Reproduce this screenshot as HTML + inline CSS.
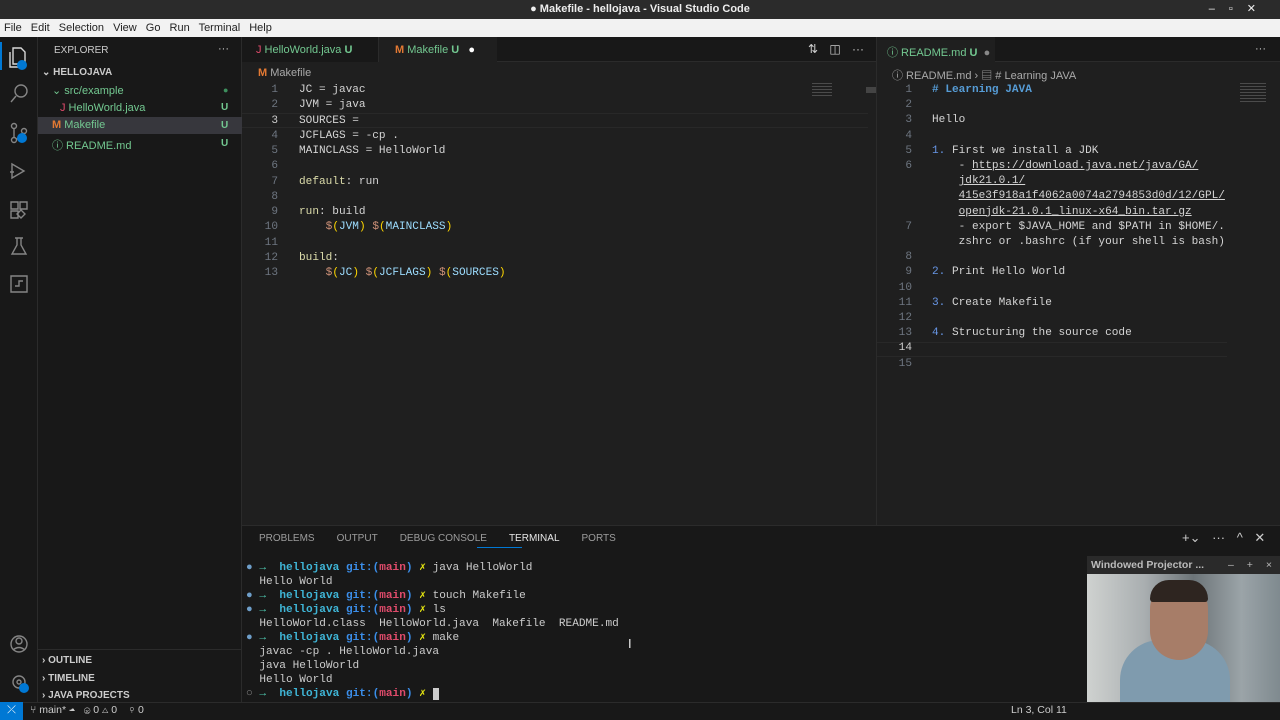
<!DOCTYPE html>
<html><head><meta charset="utf-8"><style>
*{box-sizing:border-box;margin:0;padding:0}
body{width:1280px;height:720px;overflow:hidden;background:#1f1f1f;font-family:"Liberation Sans",sans-serif;font-size:11px;color:#ccc;position:relative}
.a{position:absolute}
.mono{font-family:"Liberation Mono",monospace;font-size:11.1px;white-space:pre}
.ln{color:#6e7681;text-align:right;width:30px}
.u{color:#73c991}
</style></head><body>
<div class="a" style="left:0;top:0;width:1280px;height:19px;background:#2b2b2b;color:#eee;font-weight:bold;font-size:11px;text-align:center;line-height:19px">● Makefile - hellojava - Visual Studio Code<span style="position:absolute;right:10px;font-weight:normal;letter-spacing:14px">–▫✕</span></div>
<div class="a" style="left:0;top:19px;width:1280px;height:18px;background:#f2f2f2;color:#222;font-size:11px;line-height:18px;padding-left:4px;word-spacing:6px">File Edit Selection View Go Run Terminal Help</div>
<div class="a" style="left:0;top:37px;width:38px;height:665px;background:#181818;border-right:1px solid #2b2b2b"></div>
<div class="a" style="left:0;top:42px;width:2px;height:28px;background:#0078d4"></div>
<svg class="a" style="left:0;top:40px" width="38" height="660" fill="none" stroke="#858585" stroke-width="1.4">
<path d="M13 8h8l4 4v12h-12z M10 12v15h11" stroke="#d7d7d7"/><circle cx="22" cy="25" r="5" fill="#0078d4" stroke="none"/>
<circle cx="21" cy="51" r="6"/><path d="M16 56l-5 6"/>
<circle cx="14" cy="86" r="2.5"/><circle cx="14" cy="100" r="2.5"/><circle cx="24" cy="91" r="2.5"/><path d="M14 89v8 M24 94q0 4-8 5"/><circle cx="22" cy="98" r="5" fill="#0078d4" stroke="none"/>
<path d="M12 124l12 7-12 7z M10 132h4"/>
<path d="M11 162h7v7h-7z M20 162h7v7h-7z M11 171h7v7h-7z M21 170l4 4-4 4-4-4z"/>
<path d="M15 198h8 M17 198v7l-5 9h14l-5-9v-7"/>
<path d="M11 236h16v16h-16z M15 246h4v-5h4"/>
<circle cx="19" cy="604" r="8"/><circle cx="19" cy="601" r="3"/><path d="M13 610q6-5 12 0"/>
<circle cx="19" cy="642" r="6"/><circle cx="19" cy="642" r="2"/><circle cx="24" cy="648" r="5" fill="#0078d4" stroke="none"/>
</svg>
<div class="a" style="left:38px;top:37px;width:204px;height:665px;background:#181818;border-right:1px solid #2b2b2b"></div>
<div class="a" style="left:54px;top:45px;font-size:10px;color:#ccc">EXPLORER</div>
<div class="a" style="left:218px;top:43px;color:#ccc">···</div>
<div class="a" style="left:42px;top:67px;font-size:10px;font-weight:bold;color:#ccc">⌄ HELLOJAVA</div>
<div class="a" style="left:52px;top:84px;color:#73c991">⌄ src/example</div>
<div class="a" style="left:223px;top:85px;color:#3d8f5d;font-size:9px">●</div>
<div class="a" style="left:60px;top:102px;color:#73c991"><span style="color:#e04b6b">J</span> HelloWorld.java</div>
<div class="a" style="left:38px;top:117px;width:204px;height:17px;background:#37373d"></div>
<div class="a" style="left:52px;top:119px;color:#73c991"><span style="color:#e37933;font-weight:bold">M</span> Makefile</div>
<div class="a" style="left:52px;top:137px;color:#73c991">ⓘ README.md</div>
<div class="a u" style="left:221px;top:102px;font-weight:bold;font-size:10px">U</div>
<div class="a u" style="left:221px;top:120px;font-weight:bold;font-size:10px">U</div>
<div class="a u" style="left:221px;top:138px;font-weight:bold;font-size:10px">U</div>
<div class="a" style="left:38px;top:649px;width:204px;height:1px;background:#2b2b2b"></div>
<div class="a" style="left:42px;top:652px;font-size:10px;font-weight:bold;color:#ccc;line-height:17.5px">› OUTLINE<br>› TIMELINE<br>› JAVA PROJECTS</div>
<div class="a" style="left:242px;top:37px;width:634px;height:25px;background:#181818;border-bottom:1px solid #2b2b2b"></div>
<div class="a" style="left:242px;top:37px;width:137px;height:25px;background:#181818;border-right:1px solid #2b2b2b;padding:7px 0 0 14px;color:#73c991"><span style="color:#e04b6b">J</span> HelloWorld.java <b>U</b></div>
<div class="a" style="left:379px;top:37px;width:118px;height:26px;background:#1f1f1f;padding:7px 0 0 16px;color:#73c991"><span style="color:#e37933;font-weight:bold">M</span> Makefile <b>U</b> &nbsp;&nbsp;<span style="color:#fff">●</span></div>
<div class="a" style="left:808px;top:42px;color:#ccc;font-size:12px;word-spacing:8px">⇅ ◫ ···</div>
<div class="a" style="left:258px;top:67px;color:#aaa"><span style="color:#e37933;font-weight:bold">M</span> Makefile</div>
<div class="a" style="left:242px;top:113px;width:626px;height:15px;border-top:1px solid #282828;border-bottom:1px solid #282828"></div>
<div class="a mono ln" style="left:248px;top:83px;line-height:15.25px">1
2
<span style="color:#ccc">3</span>
4
5
6
7
8
9
10
11
12
13</div>
<div class="a mono" style="left:299px;top:83px;line-height:15.25px;color:#d4d4d4">JC = javac
JVM = java
SOURCES = 
JCFLAGS = -cp .
MAINCLASS = HelloWorld

<span style="color:#dcdcaa">default</span>: run

<span style="color:#dcdcaa">run</span>: build
    <span style="color:#ce9178">$</span><span style="color:#ffd700">(</span><span style="color:#9cdcfe">JVM</span><span style="color:#ffd700">)</span> <span style="color:#ce9178">$</span><span style="color:#ffd700">(</span><span style="color:#9cdcfe">MAINCLASS</span><span style="color:#ffd700">)</span>

<span style="color:#dcdcaa">build</span>:
    <span style="color:#ce9178">$</span><span style="color:#ffd700">(</span><span style="color:#9cdcfe">JC</span><span style="color:#ffd700">)</span> <span style="color:#ce9178">$</span><span style="color:#ffd700">(</span><span style="color:#9cdcfe">JCFLAGS</span><span style="color:#ffd700">)</span> <span style="color:#ce9178">$</span><span style="color:#ffd700">(</span><span style="color:#9cdcfe">SOURCES</span><span style="color:#ffd700">)</span></div>
<div class="a" style="left:812px;top:83px;width:20px;height:14px;background:repeating-linear-gradient(#777 0 1px,transparent 1px 3px);opacity:.5"></div>
<div class="a" style="left:866px;top:87px;width:10px;height:6px;background:#444"></div>
<div class="a" style="left:876px;top:37px;width:1px;height:488px;background:#2b2b2b"></div>
<div class="a" style="left:877px;top:37px;width:403px;height:25px;background:#181818;border-bottom:1px solid #2b2b2b"></div>
<div class="a" style="left:877px;top:37px;width:118px;height:26px;background:#1f1f1f;padding:7px 0 0 10px;color:#73c991">ⓘ README.md <b>U</b> &nbsp;<span style="color:#888">●</span></div>
<div class="a" style="left:1255px;top:43px;color:#ccc">···</div>
<div class="a" style="left:892px;top:67px;color:#aaa">ⓘ README.md › ▤ # Learning JAVA</div>
<div class="a" style="left:877px;top:342px;width:350px;height:15px;border-top:1px solid #282828;border-bottom:1px solid #282828"></div>
<div class="a mono ln" style="left:882px;top:83px;line-height:15.2px">1
2
3
4
5
6



7

8
9
10
11
12
13
<span style="color:#ccc">14</span>
15</div>
<div class="a mono" style="left:932px;top:83px;line-height:15.2px;color:#d4d4d4"><b style="color:#569cd6"># Learning JAVA</b>

Hello

<span style="color:#6796e6">1.</span> First we install a JDK
    - <u>https://download.java.net/java/GA/</u>
    <u>jdk21.0.1/</u>
    <u>415e3f918a1f4062a0074a2794853d0d/12/GPL/</u>
    <u>openjdk-21.0.1_linux-x64_bin.tar.gz</u>
    - export $JAVA_HOME and $PATH in $HOME/.
    zshrc or .bashrc (if your shell is bash)

<span style="color:#6796e6">2.</span> Print Hello World

<span style="color:#6796e6">3.</span> Create Makefile

<span style="color:#6796e6">4.</span> Structuring the source code</div>
<div class="a" style="left:1240px;top:83px;width:26px;height:20px;background:repeating-linear-gradient(#777 0 1px,transparent 1px 3px);opacity:.5"></div>
<div class="a" style="left:242px;top:525px;width:1038px;height:177px;background:#181818;border-top:1px solid #2b2b2b"></div>
<div class="a" style="left:259px;top:533px;font-size:10px;color:#9d9d9d;word-spacing:0">PROBLEMS<span style="margin-left:22px">OUTPUT</span><span style="margin-left:22px">DEBUG CONSOLE</span><span style="margin-left:22px;color:#e7e7e7">TERMINAL</span><span style="margin-left:22px">PORTS</span></div>
<div class="a" style="left:477px;top:547px;width:45px;height:1px;background:#0078d4"></div>
<div class="a" style="left:1182px;top:530px;color:#ccc;font-size:13px;word-spacing:8px">+⌄ ··· ^ ✕</div>
<div class="a mono" style="left:246px;top:561px;line-height:14px;color:#ccc"><span style="color:#6e9ec9">●</span> <span style="color:#4ec9b0">→</span>  <b style="color:#3fb5d6">hellojava</b> <b style="color:#3b8eea">git:(</b><b style="color:#e04b6b">main</b><b style="color:#3b8eea">)</b> <span style="color:#e5e510">✗</span> java HelloWorld
  Hello World
<span style="color:#6e9ec9">●</span> <span style="color:#4ec9b0">→</span>  <b style="color:#3fb5d6">hellojava</b> <b style="color:#3b8eea">git:(</b><b style="color:#e04b6b">main</b><b style="color:#3b8eea">)</b> <span style="color:#e5e510">✗</span> touch Makefile
<span style="color:#6e9ec9">●</span> <span style="color:#4ec9b0">→</span>  <b style="color:#3fb5d6">hellojava</b> <b style="color:#3b8eea">git:(</b><b style="color:#e04b6b">main</b><b style="color:#3b8eea">)</b> <span style="color:#e5e510">✗</span> ls
  HelloWorld.class  HelloWorld.java  Makefile  README.md
<span style="color:#6e9ec9">●</span> <span style="color:#4ec9b0">→</span>  <b style="color:#3fb5d6">hellojava</b> <b style="color:#3b8eea">git:(</b><b style="color:#e04b6b">main</b><b style="color:#3b8eea">)</b> <span style="color:#e5e510">✗</span> make
  javac -cp . HelloWorld.java
  java HelloWorld
  Hello World
<span style="color:#888">○</span> <span style="color:#4ec9b0">→</span>  <b style="color:#3fb5d6">hellojava</b> <b style="color:#3b8eea">git:(</b><b style="color:#e04b6b">main</b><b style="color:#3b8eea">)</b> <span style="color:#e5e510">✗</span> <span style="background:#ccc"> </span></div>
<div class="a" style="left:628px;top:636px;color:#eee;font-size:13px">I</div>
<div class="a" style="left:1087px;top:556px;width:193px;height:18px;background:#2a2a2a;color:#bbb;font-weight:bold;font-size:10.5px;line-height:18px;padding-left:4px">Windowed Projector ...<span style="position:absolute;right:8px;font-weight:normal;word-spacing:10px">– + ×</span></div>
<div class="a" style="left:1087px;top:574px;width:193px;height:146px;background:linear-gradient(90deg,#cfd2d0 0%,#a9aeb0 30%,#6c7478 55%,#9ba4a8 80%,#7f8a8f 100%)"></div>
<div class="a" style="left:1120px;top:640px;width:110px;height:80px;border-radius:40px 40px 0 0;background:#7f9bae"></div>
<div class="a" style="left:1150px;top:580px;width:58px;height:80px;border-radius:30px;background:#a77d68"></div>
<div class="a" style="left:1150px;top:580px;width:58px;height:22px;border-radius:30px 30px 5px 5px;background:#2e2520"></div>
<div class="a" style="left:0;top:702px;width:1280px;height:18px;background:#181818;border-top:1px solid #2b2b2b;color:#ccc;font-size:10.5px;line-height:17px"></div>
<div class="a" style="left:0;top:702px;width:23px;height:18px;background:#0078d4;color:#fff;text-align:center;line-height:17px">⤫</div>
<div class="a" style="left:30px;top:704px;color:#ccc;font-size:10.5px">⑂ main* ☁ &nbsp;&nbsp;ⓧ 0 △ 0 &nbsp;&nbsp;&nbsp;⚲ 0</div>
<div class="a" style="left:1011px;top:704px;color:#ccc;font-size:10.5px">Ln 3, Col 11</div>
</body></html>
